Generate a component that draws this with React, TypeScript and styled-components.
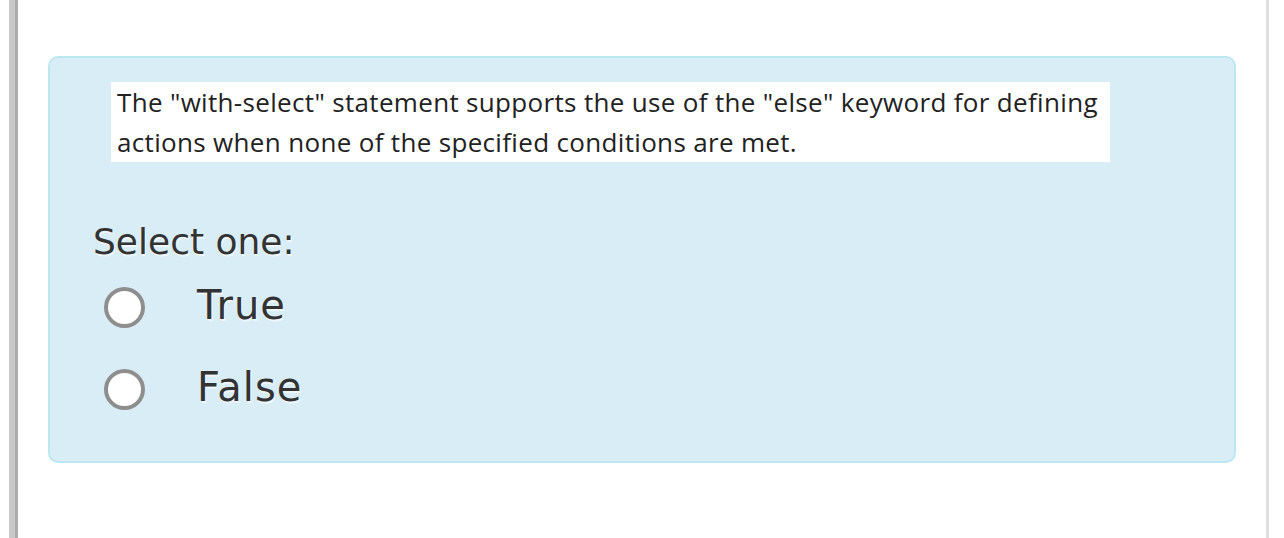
import styled, { createGlobalStyle } from "styled-components";

const GlobalStyle = createGlobalStyle`
    html, body {
        margin: 0;
        padding: 0;
        background: #fff;
    }
`

const options = ["True", "False"];

export default function App() {
    return (
        <>
            <GlobalStyle />
            <Page>
                <LeftRail />
                <Main>
                    <QuestionCard>
                        <QuestionText>
                            The "with-select" statement supports the use of the "else" keyword for defining
                            <br />
                            actions when none of the specified conditions are met.
                        </QuestionText>
                        <Prompt>Select one:</Prompt>
                        <OptionList>
                            {options.map((label) => (
                                <OptionRow key={label}>
                                    <Radio />
                                    <OptionLabel>{label}</OptionLabel>
                                </OptionRow>
                            ))}
                        </OptionList>
                    </QuestionCard>
                </Main>
                <RightRail />
            </Page>
        </>
    );
}

const Page = styled.div`
    display: flex;
    flex-direction: row;
    height: 538px;
    padding-left: 9px;
    padding-right: 15px;
    background: #fff;
    overflow: hidden;
`

const LeftRail = styled.div`
    width: 6px;
    background-color: #c9c9c9;
    border-right: 3px solid #adadad;
`

const Main = styled.div`
    flex: 1;
    padding: 56px 30px 0 30px;
`

const RightRail = styled.div`
    width: 3px;
    background-color: #dfdfdf;
`

const QuestionCard = styled.div`
    background-color: #d9edf7;
    border: 2px solid #bce8f1;
    border-radius: 10px;
    height: 407px;
    box-sizing: border-box;
    padding: 24px 41px 0 43px;
`

const QuestionText = styled.div`
    background-color: #fff;
    margin-left: 18px;
    width: 999px;
    height: 80px;
    box-sizing: border-box;
    padding: 0 6px;
    font-family: "Open Sans", sans-serif;
    font-size: 26px;
    letter-spacing: 0.33px;
    line-height: 40px;
    color: #222;
    white-space: nowrap;
`

const Prompt = styled.div`
    margin-top: 58px;
    font-family: "DejaVu Sans", Verdana, sans-serif;
    font-size: 36px;
    line-height: 44px;
    color: #333;
    text-shadow: 1px 2px 0 rgba(255, 255, 255, 0.6);
`

const OptionList = styled.div`
    display: flex;
    flex-direction: column;
    margin-top: 2px;
`

const OptionRow = styled.div`
    display: flex;
    align-items: center;
    height: 82px;
    padding-left: 11px;
`

const Radio = styled.span`
    display: inline-block;
    width: 41px;
    height: 41px;
    box-sizing: border-box;
    border: 4px solid #8e8e8e;
    border-radius: 50%;
    background-color: #fff;
`

const OptionLabel = styled.span`
    margin-left: 52px;
    margin-top: -4px;
    font-family: "DejaVu Sans", Verdana, sans-serif;
    font-size: 40px;
    letter-spacing: 1px;
    color: #333;
    text-shadow: 1px 2px 0 rgba(255, 255, 255, 0.6);
`
